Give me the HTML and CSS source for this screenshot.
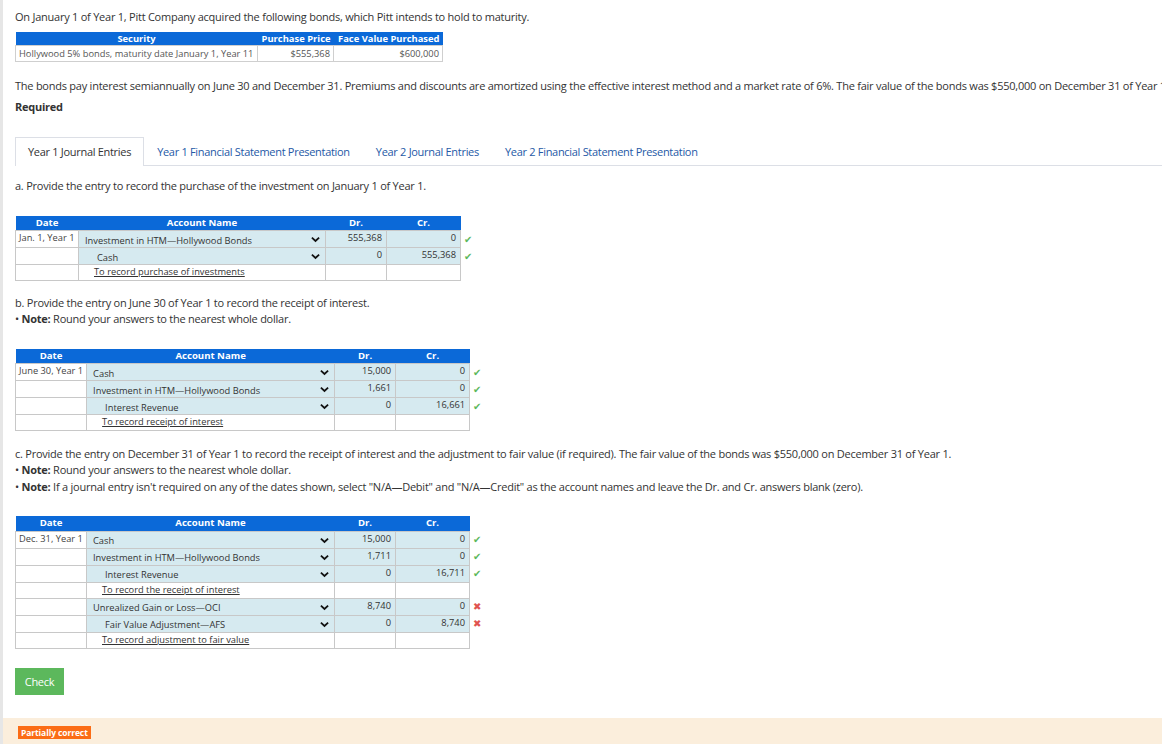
FILE: index.html
```html
<!DOCTYPE html>
<html lang="en">
<head>
    <meta charset="UTF-8">
    <title>Pitt Company Bonds</title>
    <link rel="stylesheet" href="styles.css">
</head>
<body>
<div class="page">
    <p class="intro">On January 1 of Year 1, Pitt Company acquired the following bonds, which Pitt intends to hold to maturity.</p>
    <table class="sec">
        <tr>
            <th class="c">Security</th>
            <th class="r">Purchase Price</th>
            <th class="r">Face Value Purchased</th>
        </tr>
        <tr>
            <td class="w1">Hollywood 5% bonds, maturity date January 1, Year 11</td>
            <td class="r w2">$555,368</td>
            <td class="r w3">$600,000</td>
        </tr>
    </table>

    <p class="info">The bonds pay interest semiannually on June 30 and December 31. Premiums and discounts are amortized using the effective interest method and a market rate of 6%. The fair value of the bonds was $550,000 on December 31 of Year 1.</p>
    <p class="req">Required</p>

    <div class="tabs">
        <div class="tab active">Year 1 Journal Entries</div>
        <div class="tab">Year 1 Financial Statement Presentation</div>
        <div class="tab">Year 2 Journal Entries</div>
        <div class="tab">Year 2 Financial Statement Presentation</div>
    </div>

    <p class="q qa">a. Provide the entry to record the purchase of the investment on January 1 of Year 1.</p>
    <table class="je je-a">
        <tr class="head"><th class="d">Date</th><th class="acct">Account Name</th><th class="num">Dr.</th><th class="num">Cr.</th><th class="mk"></th></tr>
        <tr class="entry"><td class="date">Jan. 1, Year 1</td><td class="acct"><span>Investment in HTM—Hollywood Bonds</span><svg class="chev" viewBox="0 0 10 7"><path d="M1 1.5 L5 5.2 L9 1.5" /></svg></td><td class="n">555,368</td><td class="n">0</td><td class="mk"><span class="ok">✔</span></td></tr>
        <tr class="entry"><td class="date"></td><td class="acct ind"><span>Cash</span><svg class="chev" viewBox="0 0 10 7"><path d="M1 1.5 L5 5.2 L9 1.5" /></svg></td><td class="n">0</td><td class="n">555,368</td><td class="mk"><span class="ok">✔</span></td></tr>
        <tr class="memo"><td class="date"></td><td class="acct"><u>To record purchase of investments</u></td><td></td><td></td><td class="mk"></td></tr>
    </table>

    <p class="q qb">b. Provide the entry on June 30 of Year 1 to record the receipt of interest.</p>
    <p class="q">• <b>Note:</b> Round your answers to the nearest whole dollar.</p>
    <table class="je je-b">
        <tr class="head"><th class="d">Date</th><th class="acct">Account Name</th><th class="num">Dr.</th><th class="num">Cr.</th><th class="mk"></th></tr>
        <tr class="entry"><td class="date">June 30, Year 1</td><td class="acct"><span>Cash</span><svg class="chev" viewBox="0 0 10 7"><path d="M1 1.5 L5 5.2 L9 1.5" /></svg></td><td class="n">15,000</td><td class="n">0</td><td class="mk"><span class="ok">✔</span></td></tr>
        <tr class="entry"><td class="date"></td><td class="acct"><span>Investment in HTM—Hollywood Bonds</span><svg class="chev" viewBox="0 0 10 7"><path d="M1 1.5 L5 5.2 L9 1.5" /></svg></td><td class="n">1,661</td><td class="n">0</td><td class="mk"><span class="ok">✔</span></td></tr>
        <tr class="entry"><td class="date"></td><td class="acct ind"><span>Interest Revenue</span><svg class="chev" viewBox="0 0 10 7"><path d="M1 1.5 L5 5.2 L9 1.5" /></svg></td><td class="n">0</td><td class="n">16,661</td><td class="mk"><span class="ok">✔</span></td></tr>
        <tr class="memo"><td class="date"></td><td class="acct"><u>To record receipt of interest</u></td><td></td><td></td><td class="mk"></td></tr>
    </table>

    <p class="q qc">c. Provide the entry on December 31 of Year 1 to record the receipt of interest and the adjustment to fair value (if required). The fair value of the bonds was $550,000 on December 31 of Year 1.</p>
    <p class="q">• <b>Note:</b> Round your answers to the nearest whole dollar.</p>
    <p class="q">• <b>Note:</b> If a journal entry isn't required on any of the dates shown, select "N/A—Debit" and "N/A—Credit" as the account names and leave the Dr. and Cr. answers blank (zero).</p>
    <table class="je je-c">
        <tr class="head"><th class="d">Date</th><th class="acct">Account Name</th><th class="num">Dr.</th><th class="num">Cr.</th><th class="mk"></th></tr>
        <tr class="entry"><td class="date">Dec. 31, Year 1</td><td class="acct"><span>Cash</span><svg class="chev" viewBox="0 0 10 7"><path d="M1 1.5 L5 5.2 L9 1.5" /></svg></td><td class="n">15,000</td><td class="n">0</td><td class="mk"><span class="ok">✔</span></td></tr>
        <tr class="entry"><td class="date"></td><td class="acct"><span>Investment in HTM—Hollywood Bonds</span><svg class="chev" viewBox="0 0 10 7"><path d="M1 1.5 L5 5.2 L9 1.5" /></svg></td><td class="n">1,711</td><td class="n">0</td><td class="mk"><span class="ok">✔</span></td></tr>
        <tr class="entry"><td class="date"></td><td class="acct ind"><span>Interest Revenue</span><svg class="chev" viewBox="0 0 10 7"><path d="M1 1.5 L5 5.2 L9 1.5" /></svg></td><td class="n">0</td><td class="n">16,711</td><td class="mk"><span class="ok">✔</span></td></tr>
        <tr class="memo"><td class="date"></td><td class="acct"><u>To record the receipt of interest</u></td><td></td><td></td><td class="mk"></td></tr>
        <tr class="entry"><td class="date"></td><td class="acct"><span>Unrealized Gain or Loss—OCI</span><svg class="chev" viewBox="0 0 10 7"><path d="M1 1.5 L5 5.2 L9 1.5" /></svg></td><td class="n">8,740</td><td class="n">0</td><td class="mk"><span class="bad">✖</span></td></tr>
        <tr class="entry"><td class="date"></td><td class="acct ind"><span>Fair Value Adjustment—AFS</span><svg class="chev" viewBox="0 0 10 7"><path d="M1 1.5 L5 5.2 L9 1.5" /></svg></td><td class="n">0</td><td class="n">8,740</td><td class="mk"><span class="bad">✖</span></td></tr>
        <tr class="memo"><td class="date"></td><td class="acct"><u>To record adjustment to fair value</u></td><td></td><td></td><td class="mk"></td></tr>
    </table>

    <button type="button" class="check">Check</button>

    <div class="result">
        <span class="badge">Partially correct</span>
    </div>
</div>
</body>
</html>
```

FILE: styles.css
```css
body {
    margin: 0;
    font-family: "Open Sans", Arial, sans-serif;
    font-size: 11px;
    color: #333;
    overflow: hidden;
}
.page {
    border-left: 3px solid #e6e6e6;
    padding-left: 12px;
    min-height: 100vh;
    box-sizing: border-box;
    letter-spacing: -0.24px;
}
p {
    margin: 0;
    line-height: 16px;
}
.intro {
    padding-top: 9px;
}

/* security table */
.sec {
    border-collapse: collapse;
    margin-top: 7px;
    font-size: 9.3px;
    letter-spacing: 0;
}
.sec th {
    background-color: #0b69d8;
    color: white;
    font-weight: bold;
    font-size: 9.4px;
    height: 13px;
    padding: 0 3px;
    line-height: 13px;
}
.sec td {
    border: 1px solid #cfcfcf;
    color: #555;
    height: 15px;
    padding: 0 3px;
}
.sec .c { text-align: center; }
.sec .r { text-align: right; }
.sec .w1 { width: 235px; }
.sec .w2 { width: 69px; }
.sec .w3 { width: 102px; }

.info {
    margin-top: 16px;
    white-space: nowrap;
}
.req {
    margin-top: 5px;
    font-weight: bold;
}

/* tabs */
.tabs {
    display: flex;
    margin-top: 22px;
    border-bottom: 1px solid #dcdfe6;
    height: 28px;
}
.tab {
    padding: 0 12px;
    line-height: 28px;
    color: #2559a6;
    border: 1px solid transparent;
    border-bottom: none;
    letter-spacing: -0.3px;
}
.tab.active {
    color: #333;
    border-color: #dcdfe6;
    background: white;
    height: 28px;
}

.q {
    line-height: 16.5px;
}
.qa { margin-top: 12px; }
.qb { margin-top: 13.5px; }
.qc { margin-top: 14.5px; }
.q b { font-weight: bold; }

/* journal tables */
.je {
    border-collapse: collapse;
    font-size: 9.3px;
    letter-spacing: 0;
    margin-top: 21px;
}
.je tr.head { height: 15px; }
.je tr.entry { height: 17px; }
.je tr.memo { height: 16px; }
.je th {
    background-color: #0b69d8;
    color: white;
    font-weight: bold;
    font-size: 9.6px;
    padding: 0;
    line-height: 14px;
}
.je th.mk {
    background: none;
}
.je td {
    border: 1px solid #c8c8c8;
    padding: 0;
    color: #333;
}
.je tr.entry td.acct,
.je tr.entry td.n {
    background-color: #d6eaf0;
}
.je td.date {
    background: white;
    color: #444;
    padding: 0 3px;
    vertical-align: top;
    line-height: 13px;
    white-space: nowrap;
}
.je td.acct {
    padding-left: 6px;
    position: relative;
}
.je td.acct span {
    display: inline-block;
    padding-top: 2px;
}
.je td.ind span {
    padding-left: 12px;
}
.je td.acct u {
    padding-left: 9px;
    color: #333;
    text-decoration-color: #333;
    line-height: 12px;
    vertical-align: top;
}
.chev {
    position: absolute;
    right: 5px;
    top: 5px;
    width: 9px;
    height: 7px;
}
.chev path {
    fill: none;
    stroke: #111;
    stroke-width: 2;
}
.je td.n {
    text-align: right;
    padding-right: 4px;
    vertical-align: top;
    line-height: 13px;
}
.je td.mk {
    border: none;
    background: none;
    padding-left: 3px;
    width: 10px;
    font-size: 9.5px;
}
.ok { color: #5cb85c; }
.bad { color: #e0534f; }

.je-a .d { width: 63px; }
.je-a th.acct { width: 247px; }
.je-a th.num { width: 61px; }
.je-a th.num + th.num { width: 74px; }
.je-b .d, .je-c .d { width: 71px; }
.je-b th.acct, .je-c th.acct { width: 248px; }
.je-b th.num, .je-c th.num { width: 61px; }
.je-b th.num + th.num, .je-c th.num + th.num { width: 74px; }

.check {
    display: block;
    margin-top: 19px;
    width: 49px;
    height: 27px;
    background-color: #5cb85c;
    color: white;
    border: none;
    font-family: "Open Sans", Arial, sans-serif;
    font-size: 11px;
    letter-spacing: -0.3px;
    padding: 0;
}

.result {
    display: flex;
    align-items: flex-start;
    margin-top: 23px;
    margin-left: -12px;
    padding: 8px 15px 0;
    height: 26px;
    box-sizing: border-box;
    background-color: #fbeedc;
}
.badge {
    display: block;
    background-color: #fb6c15;
    color: white;
    font-weight: bold;
    font-size: 8.5px;
    line-height: 13px;
    padding: 0 3px;
    letter-spacing: -0.1px;
}
```
